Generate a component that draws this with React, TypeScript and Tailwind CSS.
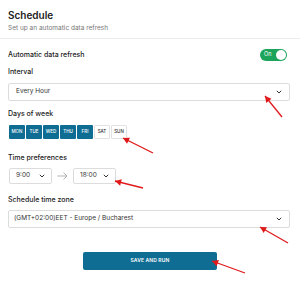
import React, { useState } from 'react';

const DAYS = ['MON', 'TUE', 'WED', 'THU', 'FRI', 'SAT', 'SUN'];

function Chevron() {
  return (
    <svg width="6" height="4" viewBox="0 0 6 4" className="shrink-0">
      <path d="M0.8 0.8 L3 3 L5.2 0.8" fill="none" stroke="#333" strokeWidth="1" />
    </svg>
  );
}

function Arrow({ x1, y1, x2, y2 }: { x1: number; y1: number; x2: number; y2: number }) {
  const a = Math.atan2(y2 - y1, x2 - x1);
  const l = 7;
  const w = 0.5;
  const p1 = `${x2 - l * Math.cos(a - w)},${y2 - l * Math.sin(a - w)}`;
  const p2 = `${x2 - l * Math.cos(a + w)},${y2 - l * Math.sin(a + w)}`;
  return (
    <g>
      <line x1={x1} y1={y1} x2={x2} y2={y2} stroke="#e0191b" strokeWidth="1.3" />
      <polygon points={`${x2},${y2} ${p1} ${p2}`} fill="#e0191b" />
    </g>
  );
}

export default function App() {
  const [on, setOn] = useState(true);
  const [days, setDays] = useState(['MON', 'TUE', 'WED', 'THU', 'FRI']);

  const toggleDay = (d: string) =>
    setDays((prev) => (prev.includes(d) ? prev.filter((x) => x !== d) : [...prev, d]));

  return (
    <div className="relative w-[300px] h-[291px] bg-white overflow-hidden text-[#222] font-['Inter',sans-serif]">
      {/* header */}
      <div className="px-2 pt-[8px] h-[39px] border-b border-[#ededed]">
        <h2 className="text-[10px] font-semibold leading-[14px]">Schedule</h2>
        <p className="text-[6.5px] text-[#777] leading-[10px] mt-[1px]">Set up an automatic data refresh</p>
      </div>

      <div className="px-2 border-b border-[#ededed] h-[251px]">
        {/* toggle row */}
        <div className="flex items-center justify-between h-[12px] mt-[10px] pr-[5px]">
          <span className="text-[7px] font-medium">Automatic data refresh</span>
          <button
            onClick={() => setOn(!on)}
            className={`w-[27px] h-[12px] rounded-full flex items-center px-[1px] ${on ? 'bg-[#1ca45a] justify-between' : 'bg-[#ccc] justify-start'}`}
          >
            {on && <span className="text-[5.5px] text-white pl-[3px] leading-none">On</span>}
            <span className="w-[10px] h-[10px] rounded-full bg-white" />
          </button>
        </div>

        <div className="text-[7px] font-medium mt-[5px] leading-[12px]">Interval</div>
        <div className="mt-[5px] h-[18px] w-[282px] border border-[#dcdcdc] rounded-[2px] flex items-center justify-between px-[7px]">
          <span className="text-[6.5px] text-[#333]">Every Hour</span>
          <Chevron />
        </div>

        <div className="text-[7px] font-medium mt-[7px] leading-[12px]">Days of week</div>
        <div className="mt-[5px] flex gap-[1px] pl-[1px]">
          {DAYS.map((d) => {
            const sel = days.includes(d);
            return (
              <button
                key={d}
                onClick={() => toggleDay(d)}
                className={`w-[16px] h-[14px] rounded-[1px] text-[4.5px] font-medium flex items-center justify-center ${
                  sel ? 'bg-[#0f6d93] text-white' : 'bg-white text-[#333] border border-[#e3e3e3]'
                }`}
              >
                {d}
              </button>
            );
          })}
        </div>

        <div className="text-[7px] font-medium mt-[13px] leading-[12px]">Time preferences</div>
        <div className="mt-[4px] flex items-center pl-[1px]">
          <div className="w-[43px] h-[16px] border border-[#dcdcdc] rounded-[2px] flex items-center justify-between pl-[6px] pr-[6px]">
            <span className="text-[6.5px] text-[#333]">9:00</span>
            <Chevron />
          </div>
          <div className="w-[21px] flex justify-center">
            <svg width="11" height="8" viewBox="0 0 11 8">
              <path d="M0.5 4 H10 M6.5 0.7 L10 4 L6.5 7.3" fill="none" stroke="#aaa" strokeWidth="0.9" />
            </svg>
          </div>
          <div className="w-[43px] h-[16px] border border-[#dcdcdc] rounded-[2px] flex items-center justify-between pl-[6px] pr-[6px]">
            <span className="text-[6.5px] text-[#333]">18:00</span>
            <Chevron />
          </div>
        </div>

        <div className="text-[7px] font-medium mt-[10px] leading-[12px]">Schedule time zone</div>
        <div className="mt-[4px] h-[18px] w-[282px] border border-[#dcdcdc] rounded-[2px] flex items-center justify-between px-[5px] pr-[7px]">
          <span className="text-[6.5px] text-[#333]">(GMT+02:00)EET - Europe / Bucharest</span>
          <Chevron />
        </div>

        <div className="mt-[24px] flex justify-center">
          <button className="w-[134px] h-[18px] rounded-[2px] bg-[#0f6d93] text-white text-[5px] font-semibold tracking-wide">
            SAVE AND RUN
          </button>
        </div>
      </div>

      {/* annotation arrows */}
      <svg className="absolute inset-0 pointer-events-none" width="300" height="291">
        <Arrow x1={282} y1={117} x2={265} y2={96} />
        <Arrow x1={153} y1={153} x2={123} y2={138} />
        <Arrow x1={143} y1={188} x2={115} y2={181} />
        <Arrow x1={288} y1={243} x2={260} y2={227} />
        <Arrow x1={245} y1={273} x2={212} y2={261} />
      </svg>
    </div>
  );
}
